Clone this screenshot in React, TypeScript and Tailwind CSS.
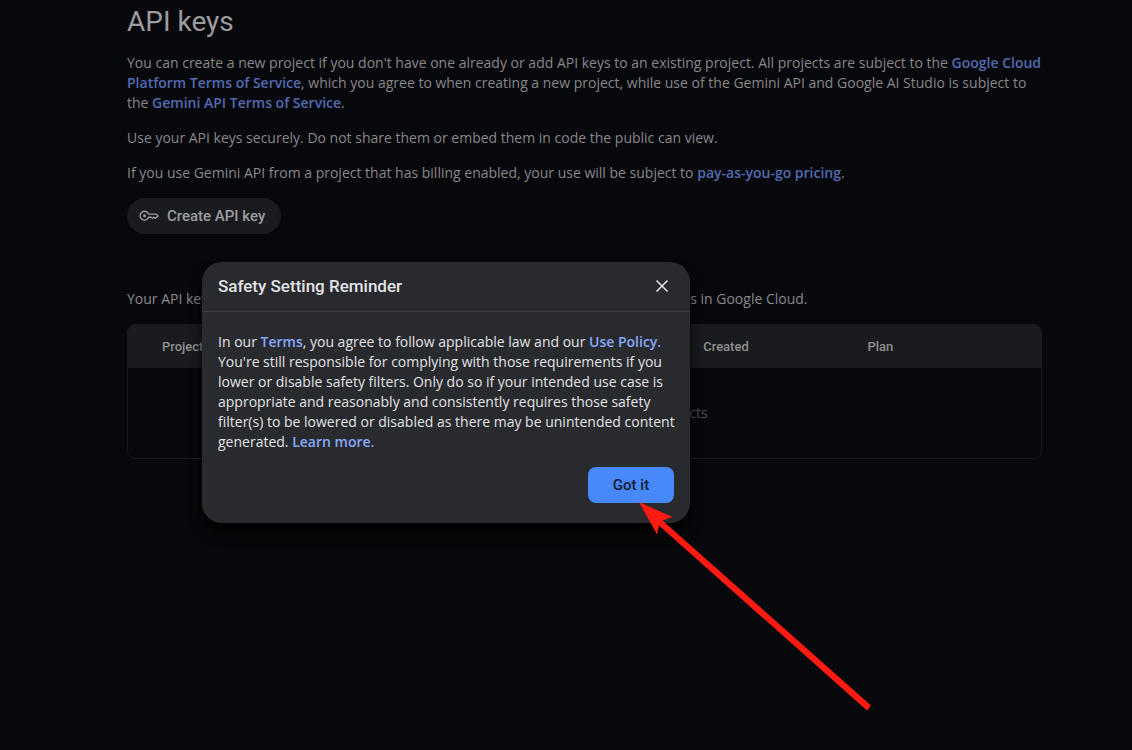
import type { ReactNode } from 'react';

const columns = [
  { label: 'Project number', width: 'w-[22%]' },
  { label: 'Project name', width: 'w-[21%]' },
  { label: 'API key', width: 'w-[20%]' },
  { label: 'Created', width: 'w-[18%]' },
  { label: 'Plan', width: 'w-[19%]' },
];

function TextLink({ children }: { children: ReactNode }) {
  return (
    <a href="#" className="font-semibold text-[#546bb3]">
      {children}
    </a>
  );
}

function DialogLink({ children }: { children: ReactNode }) {
  return (
    <a href="#" className="font-semibold text-[#87a9ff]">
      {children}
    </a>
  );
}

function KeyIcon() {
  return (
    <svg className="w-5 h-5" viewBox="0 0 20 20" fill="none" stroke="currentColor" strokeWidth={1.4} aria-hidden="true">
      <path
        strokeLinejoin="round"
        d="M9.6 8.1h7.800l1.600 1.900-2.600 2.300-1.500-1-1.400 1-1.400-1H9.600a4.400 4.400 0 1 1 0-3.200z"
      />
      <circle cx="5.500" cy="9.800" r="1.500" fill="currentColor" stroke="none" />
    </svg>
  );
}

function CloseIcon() {
  return (
    <svg className="w-5 h-5" viewBox="0 0 20 20" fill="none" stroke="currentColor" strokeWidth={1.6} aria-hidden="true">
      <path d="M4.500 4.500l11 11M15.500 4.500l-11 11" />
    </svg>
  );
}

function KeysTable() {
  return (
    <div className="mt-[15px] rounded-lg overflow-hidden border border-[#1a1b1e]">
      <table className="w-full table-fixed text-left">
        <thead className="bg-[#1a1b1e] font-['Roboto',sans-serif] text-[13px] text-[#8e8f91]">
          <tr className="h-[43px]">
            {columns.map((col) => (
              <th key={col.label} className={`${col.width} font-medium first:pl-[34px] whitespace-nowrap`}>
                {col.label}
              </th>
            ))}
          </tr>
        </thead>
        <tbody>
          <tr className="h-[90px]">
            <td colSpan={5} className="text-center text-[#4c4d50]">
              You don't have any Cloud API projects
            </td>
          </tr>
        </tbody>
      </table>
    </div>
  );
}

function SafetyDialog() {
  return (
    <div
      role="dialog"
      aria-labelledby="safety-title"
      className="absolute left-[202px] top-[262px] w-[488px] rounded-[20px] bg-[#292a2d] text-[#e2e3e6] shadow-lg shadow-black"
    >
      <div className="flex items-center justify-between h-[50px] pl-4 pr-[18px] pb-[2px] border-b border-[#3b3c40]">
        <h2 id="safety-title" className="font-['Roboto',sans-serif] text-[17px] font-medium">Safety Setting Reminder</h2>
        <button type="button" aria-label="Close">
          <CloseIcon />
        </button>
      </div>
      <div className="px-4 py-5">
        <p className="-mr-2">
          In our <DialogLink>Terms</DialogLink>, you agree to follow applicable law and our{' '}
          <DialogLink>Use Policy.</DialogLink>
          <br />
          You're still responsible for complying with those requirements if you lower or disable safety filters. Only
          do so if your intended use case is appropriate and reasonably and consistently requires those safety
          filter(s) to be lowered or disabled as there may be unintended content generated.{' '}
          <DialogLink>Learn more.</DialogLink>
        </p>
        <div className="flex justify-end mt-[15px]">
          <button
            type="button"
            className="h-9 w-[86px] rounded-lg bg-[#4788fa] font-['Roboto',sans-serif] text-[15px] font-medium text-[#131d33]"
          >
            Got it
          </button>
        </div>
      </div>
    </div>
  );
}

function PointerArrow() {
  return (
    <svg
      className="absolute left-[638px] top-[501px] w-[234px] h-[210px] pointer-events-none"
      viewBox="638 501 234 210"
      fill="#ff1a12"
      aria-hidden="true"
    >
      <path d="M639 502L672.500 517L662.500 520.500L871 705.500L867 710.500L659 525.500L657 534.500Z" />
    </svg>
  );
}

export default function App() {
  return (
    <div className="relative min-h-screen overflow-hidden bg-[#07080b] font-['Open_Sans',sans-serif] text-[14px] leading-5 text-[#88898b]">
      <main className="pl-[127px] pr-[90px] pt-1">
        <h1 className="font-['Roboto',sans-serif] text-[28px] leading-9 text-[#9c9c9e]">API keys</h1>
        <p className="mt-[13px] -mr-2">
          You can create a new project if you don't have one already or add API keys to an existing project. All
          projects are subject to the <TextLink>Google Cloud Platform Terms of Service</TextLink>, which you agree to
          when creating a new project, while use of the Gemini API and Google AI Studio is subject to the{' '}
          <TextLink>Gemini API Terms of Service</TextLink>.
        </p>
        <p className="mt-[15px]">
          Use your API keys securely. Do not share them or embed them in code the public can view.
        </p>
        <p className="mt-[15px]">
          If you use Gemini API from a project that has billing enabled, your use will be subject to{' '}
          <TextLink>pay-as-you-go pricing</TextLink>.
        </p>
        <button
          type="button"
          className="flex items-center gap-2 mt-[15px] h-9 pl-3 pr-4 rounded-full bg-[#1a1b1e] font-['Roboto',sans-serif] text-[15px] font-medium text-[#9c9d9f]"
        >
          <KeyIcon />
          Create API key
        </button>
        <p className="mt-[55px]">
          Your API keys are listed below. You can also view and manage your project and API keys in Google Cloud.
        </p>
        <KeysTable />
      </main>
      <SafetyDialog />
      <PointerArrow />
    </div>
  );
}
